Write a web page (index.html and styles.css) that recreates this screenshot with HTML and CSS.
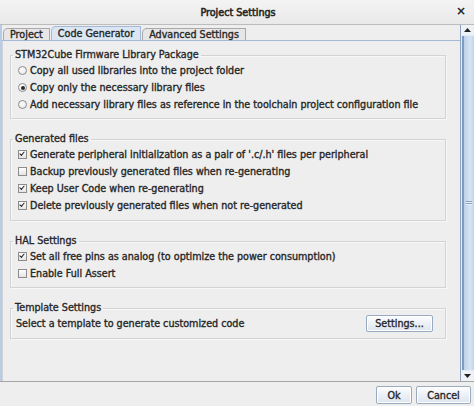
FILE: index.html
```html
<!DOCTYPE html>
<html>
<head>
<meta charset="utf-8">
<link rel="stylesheet" href="styles.css">
</head>
<body>
<div class="window">
  <div class="titlebar">
    <span class="title">Project Settings</span>
    <span class="close">×</span>
  </div>
  <div class="middle">
    <div class="pane">
      <div class="tabs">
        <div class="tab">Project</div>
        <div class="tab selected">Code Generator</div>
        <div class="tab">Advanced Settings</div>
      </div>
      <div class="viewport">
        <fieldset class="group">
          <legend>STM32Cube Firmware Library Package</legend>
          <div class="rows">
            <div class="row"><span class="radio"></span><span>Copy all used libraries into the project folder</span></div>
            <div class="row"><span class="radio on"></span><span>Copy only the necessary library files</span></div>
            <div class="row"><span class="radio"></span><span>Add necessary library files as reference in the toolchain project configuration file</span></div>
          </div>
        </fieldset>
        <fieldset class="group">
          <legend>Generated files</legend>
          <div class="rows g2">
            <div class="row"><span class="check on"></span><span>Generate peripheral initialization as a pair of '.c/.h' files per peripheral</span></div>
            <div class="row"><span class="check"></span><span>Backup previously generated files when re-generating</span></div>
            <div class="row"><span class="check on"></span><span>Keep User Code when re-generating</span></div>
            <div class="row"><span class="check on"></span><span>Delete previously generated files when not re-generated</span></div>
          </div>
        </fieldset>
        <fieldset class="group">
          <legend>HAL Settings</legend>
          <div class="rows">
            <div class="row"><span class="check on"></span><span>Set all free pins as analog (to optimize the power consumption)</span></div>
            <div class="row"><span class="check"></span><span>Enable Full Assert</span></div>
          </div>
        </fieldset>
        <fieldset class="group">
          <legend>Template Settings</legend>
          <div class="template">
            <span>Select a template to generate customized code</span>
            <button class="btn settings">Settings...</button>
          </div>
        </fieldset>
      </div>
    </div>
    <div class="scrollbar">
      <div class="arrow up"><svg width="7" height="4" viewBox="0 0 7 4"><path d="M0 4 L3.5 0 L7 4 Z" fill="#222"/></svg></div>
      <div class="track"><div class="thumb"><span class="grip"></span></div></div>
      <div class="arrow down"><svg width="7" height="4" viewBox="0 0 7 4"><path d="M0 0 L3.5 4 L7 0 Z" fill="#222"/></svg></div>
    </div>
  </div>
  <div class="footer">
    <button class="btn ok">Ok</button>
    <button class="btn cancel">Cancel</button>
  </div>
</div>
</body>
</html>
```
FILE: styles.css
```css
html, body {
  margin: 0;
  padding: 0;
  background: #eeeeee;
}
.window {
  width: 474px;
  height: 406px;
  display: flex;
  flex-direction: column;
  font-family: "DejaVu Sans", sans-serif;
  font-size: 9.6px;
  color: #262626;
  -webkit-text-stroke: 0.35px #262626;
  overflow: hidden;
}
.titlebar {
  height: 24px;
  flex: none;
  display: flex;
  align-items: center;
  justify-content: center;
  background: linear-gradient(#f4f4f4, #e9e9e9);
  border-bottom: 1px solid #bcbcbc;
  position: relative;
}
.title {
  -webkit-text-stroke: 0.55px #262626;
  margin-left: 2px;
}
.close {
  position: absolute;
  right: 8px;
  top: 4px;
  font-size: 12px;
  font-weight: bold;
  -webkit-text-stroke: 0;
}
.middle {
  flex: 1;
  display: flex;
  min-height: 0;
}
.pane {
  flex: 1;
  display: flex;
  flex-direction: column;
  border-left: 2px solid #b7cde7;
}
.tabs {
  height: 15px;
  flex: none;
  display: flex;
  align-items: flex-end;
  padding-left: 1px;
  border-bottom: 1px solid #a4b8d8;
}
.tab {
  height: 11px;
  line-height: 11px;
  padding: 0 6px;
  border: 1px solid #a9a9a9;
  border-bottom: none;
  border-top-left-radius: 5px;
  background: #e6e6e6;
  margin-right: 1px;
}
.tab.selected {
  height: 13px;
  line-height: 14px;
  background: #dbe6f2;
  border-color: #a4b8d8;
}
.viewport {
  flex: 1;
  padding: 8px 14px 0 7px;
  border-left: 1px solid #d2d2d2;
}
.group {
  margin: 0 0 14px 0;
  padding: 0;
  border: 1px solid #d3d3d3;
  box-shadow: inset 1px 1px 0 #f8f8f8, 1px 1px 0 #f8f8f8;
  min-width: 0;
}
.group legend {
  padding: 0 2px;
  margin-left: 2px;
  line-height: 12px;
  height: 12px;
}
.rows {
  padding: 1px 4px 5px 7px;
}
.rows.g2 {
  padding-bottom: 6px;
}
.row {
  height: 17px;
  display: flex;
  align-items: center;
  gap: 3px;
  white-space: nowrap;
}
.radio {
  width: 7px;
  height: 7px;
  border: 1px solid #8c8c8c;
  border-radius: 50%;
  background: radial-gradient(circle at 40% 35%, #ffffff, #e2e2e2);
  display: flex;
  align-items: center;
  justify-content: center;
  flex: none;
}
.radio.on::after {
  content: "";
  width: 4px;
  height: 4px;
  border-radius: 50%;
  background: #2b2b2b;
}
.check {
  width: 7px;
  height: 7px;
  border: 1px solid #8c8c8c;
  background: linear-gradient(#ffffff, #e4e4e4);
  flex: none;
  position: relative;
}
.check.on::after {
  content: "";
  position: absolute;
  left: 1px;
  top: 0px;
  width: 2px;
  height: 4px;
  border: solid #222;
  border-width: 0 1.5px 1.5px 0;
  transform: translate(0.5px, -0.5px) rotate(40deg);
}
.template {
  height: 19px;
  display: flex;
  align-items: center;
  justify-content: space-between;
  padding: 0 12px 5px 5px;
}
.btn {
  font-family: "DejaVu Sans", sans-serif;
  font-size: 9.6px;
  color: #262626;
  -webkit-text-stroke: 0.35px #262626;
  height: 17px;
  padding: 0;
  border: 1px solid #9aabbf;
  border-radius: 2px;
  background: linear-gradient(#fcfdfe, #dde5ee);
  box-shadow: inset 0 0 0 1px #ffffff;
}
.settings {
  width: 67px;
  height: 17px;
}
.scrollbar {
  width: 13px;
  flex: none;
  display: flex;
  flex-direction: column;
  border-left: 1px solid #8ea4c2;
  background: #e3ebf4;
}
.arrow {
  height: 10px;
  flex: none;
  display: flex;
  align-items: center;
  justify-content: center;
  background: #eef2f6;
}
.track {
  flex: 1;
  display: flex;
  padding: 1px 0 1px 1px;
}
.thumb {
  flex: 1;
  border-left: 2px solid #7e9cc3;
  background: linear-gradient(90deg, #bcd1e8, #d8e5f3 60%, #c2d5ea);
  display: flex;
  align-items: center;
  justify-content: center;
}
.grip {
  width: 6px;
  height: 4px;
  background: repeating-linear-gradient(#8aa3c2 0 1px, #e9f0f8 1px 2px);
}
.footer {
  height: 25px;
  flex: none;
  border-top: 1px solid #a6a6a6;
  display: flex;
  justify-content: flex-end;
  align-items: flex-start;
  padding: 4px 3px 0 0;
  gap: 4px;
  box-sizing: border-box;
}
.ok {
  width: 36px;
  height: 18px;
}
.cancel {
  width: 55px;
  height: 18px;
}
```
